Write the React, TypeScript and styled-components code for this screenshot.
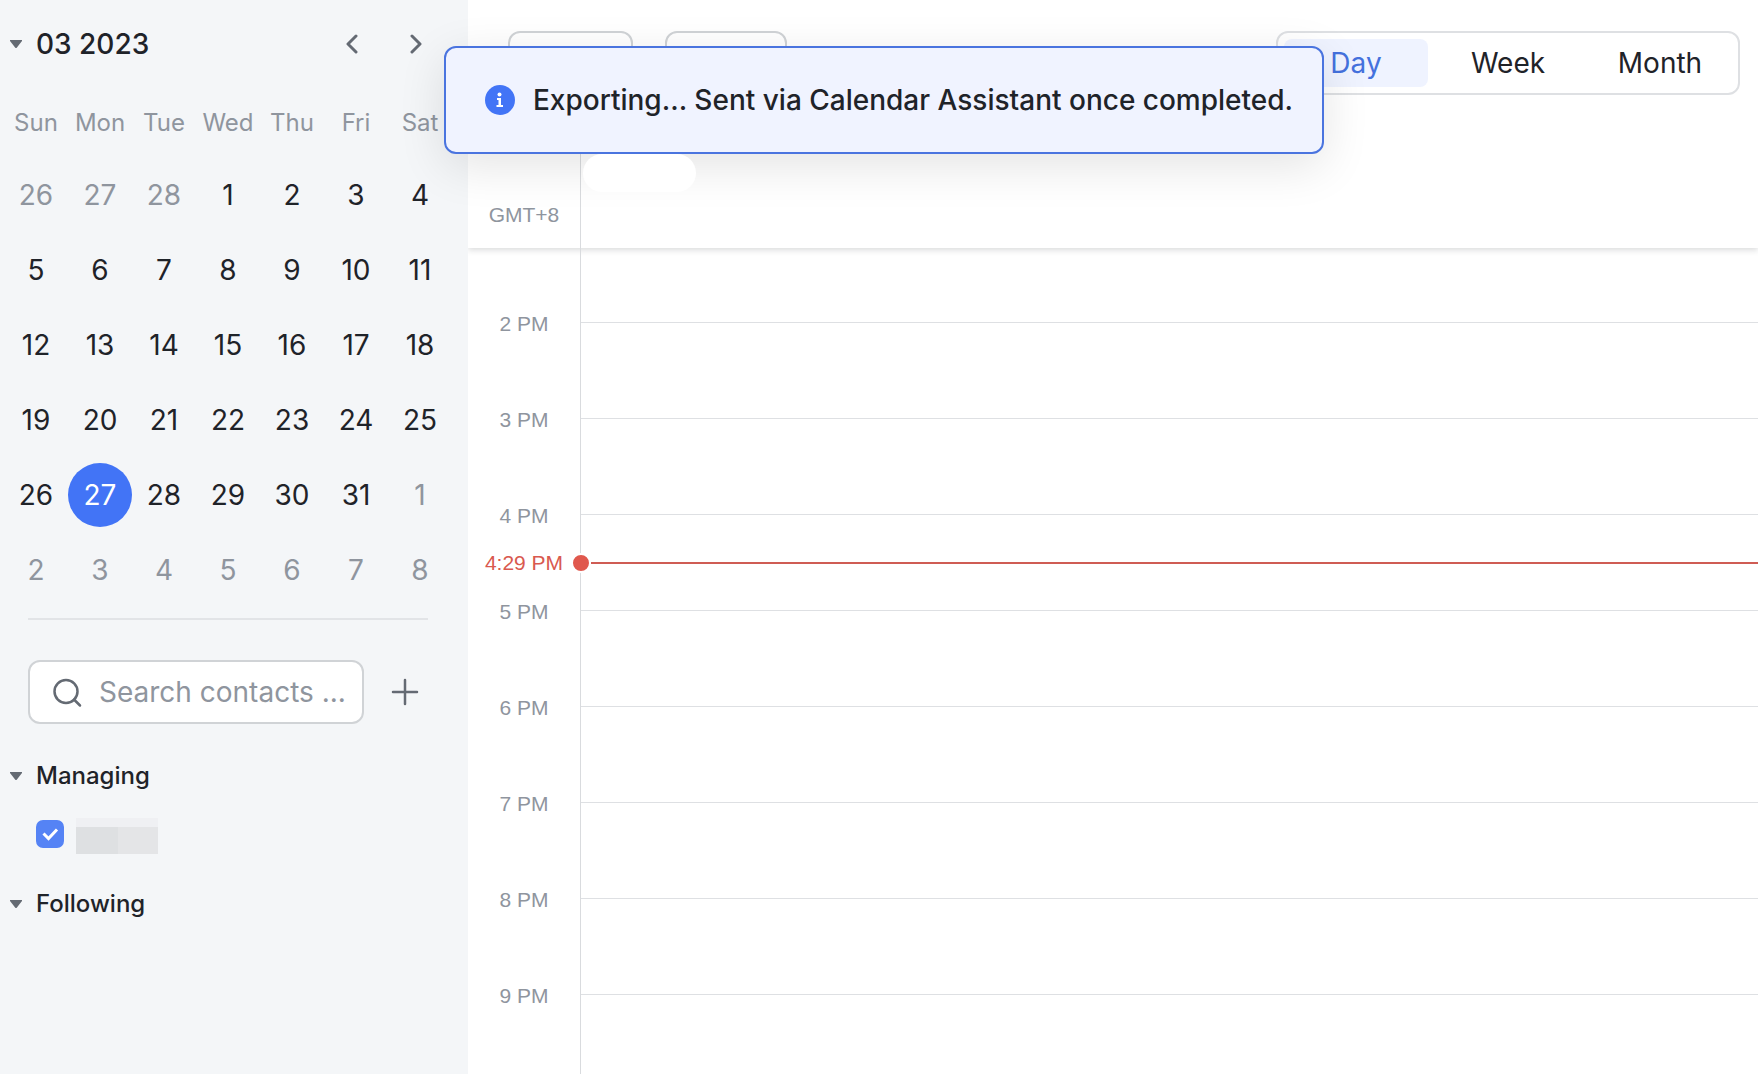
import React, { useState } from "react";
import styled, { createGlobalStyle } from "styled-components";

const GlobalStyle = createGlobalStyle`
  *, *::before, *::after { box-sizing: border-box; }
  body { margin: 0; background: #ffffff; }
  body, button, input {
    font-family: Inter, "Liberation Sans", sans-serif;
    color: #1f2329;
  }
  button {
    margin: 0;
    padding: 0;
    border: 0;
    background: none;
    cursor: pointer;
  }
`;

const Shell = styled.div`
  position: relative;
  display: flex;
  height: 100vh;
  min-height: 900px;
  overflow: hidden;
`;

const Sidebar = styled.aside`
  flex: 0 0 468px;
  min-width: 0;
  background: #f4f6f8;
`;

const MonthBar = styled.div`
  display: flex;
  align-items: center;
  height: 88px;
  padding-right: 35px;
`;

const Foldout = styled.button<{ $large?: boolean }>`
  display: flex;
  align-items: center;
  gap: 14px;
  padding-left: 10px;
  font-size: ${(p) => (p.$large ? 28 : 24)}px;
  line-height: 36px;
  font-weight: 500;
`;

const MonthNav = styled.div`
  display: flex;
  gap: 32px;
  margin-left: auto;
`;

const IconButton = styled.button`
  display: flex;
  align-items: center;
  justify-content: center;
  width: 33px;
  height: 32px;
  color: #646a73;
`;

const WeekGrid = styled.div`
  display: grid;
  grid-template-columns: repeat(7, 64px);
  row-gap: 11px;
  padding-left: 4px;
`;

const Weekday = styled.span`
  height: 64px;
  font-size: 24px;
  line-height: 70px;
  text-align: center;
  color: #8f959e;
`;

const DayCell = styled.button<{ $muted: boolean; $selected: boolean }>`
  height: 64px;
  border-radius: 50%;
  font-size: 28px;
  line-height: 64px;
  color: ${(p) => (p.$selected ? "#ffffff" : p.$muted ? "#8f959e" : "#1f2329")};
  background: ${(p) => (p.$selected ? "#4274f6" : "transparent")};
`;

const Divider = styled.hr`
  height: 2px;
  margin: 16px 40px 40px 28px;
  border: 0;
  background: #e2e4e7;
`;

const SearchRow = styled.div`
  display: flex;
  align-items: center;
  gap: 24px;
  padding: 0 47px 0 28px;
`;

const SearchBox = styled.label`
  display: flex;
  align-items: center;
  gap: 16px;
  flex: 1;
  min-width: 0;
  height: 64px;
  padding: 0 12px 0 22px;
  border: 2px solid #d0d3d6;
  border-radius: 12px;
  background: #ffffff;
  color: #646a73;

  > svg {
    flex: none;
  }
`;

const SearchInput = styled.input`
  flex: 1;
  width: 0;
  min-width: 0;
  padding: 0;
  border: 0;
  outline: 0;
  background: transparent;
  font-size: 28px;
  line-height: 36px;
  text-overflow: ellipsis;

  &::placeholder {
    color: #8f959e;
    opacity: 1;
  }
`;

const Group = styled.section`
  display: flex;
  flex-direction: column;
  align-items: flex-start;
  margin-top: 34px;
`;

const CalendarItem = styled.label`
  display: flex;
  align-items: center;
  gap: 12px;
  height: 36px;
  margin-top: 22px;
  padding-left: 36px;
`;

const CheckWrap = styled.span`
  display: grid;
  width: 28px;
  height: 28px;

  > * {
    grid-area: 1 / 1;
  }
`;

const Checkbox = styled.input`
  appearance: none;
  width: 28px;
  height: 28px;
  margin: 0;
  border: 2px solid #8f959e;
  border-radius: 7px;

  &:checked {
    border-color: #5583f5;
    background: #5583f5;
  }
`;

const CheckMark = styled.svg`
  pointer-events: none;
`;

const MaskedName = styled.span`
  width: 82px;
  height: 36px;
  margin-top: 4px;
  border-top: 9px solid #eff0f3;
  background: linear-gradient(90deg, #dee0e2 0 42px, #e4e5e7 42px);
`;

const Main = styled.main`
  display: flex;
  flex: 1;
  flex-direction: column;
  min-width: 0;
  overflow: hidden;
`;

const Header = styled.header`
  display: flex;
  flex-direction: column;
  height: 248px;
  background: #ffffff;
  box-shadow: 0 2px 6px rgba(31, 35, 41, 0.17);
`;

const Toolbar = styled.div`
  display: flex;
  gap: 32px;
  padding: 31px 18px 0 40px;
`;

const ToolButton = styled.button<{ $width: number }>`
  width: ${(p) => p.$width}px;
  height: 64px;
  border: 2px solid #d0d3d6;
  border-radius: 12px;
`;

const ViewSwitch = styled.div`
  display: flex;
  gap: 8px;
  height: 64px;
  margin-left: auto;
  padding: 6px;
  border: 2px solid #dee0e3;
  border-radius: 12px;
`;

const ViewButton = styled.button<{ $active: boolean }>`
  width: 144px;
  border-radius: 8px;
  font-size: 28px;
  line-height: 48px;
  color: ${(p) => (p.$active ? "#4471dd" : "#1f2329")};
  background: ${(p) => (p.$active ? "#eff3ff" : "transparent")};
`;

const AllDayRow = styled.div`
  display: flex;
  flex: 1;
`;

const ZoneLabel = styled.span`
  display: flex;
  align-items: flex-end;
  justify-content: center;
  width: 112px;
  padding-bottom: 21px;
  font-family: "Liberation Sans", Arial, sans-serif;
  font-size: 21px;
  line-height: 24px;
  color: #8f959e;
`;

const AllDayLane = styled.div`
  display: flex;
  align-items: flex-start;
  flex: 1;
  padding: 59px 2px 0;
  border-left: 1px solid #d9dbde;
`;

const AllDayEvent = styled.span`
  position: relative;
  z-index: 3;
  width: 113px;
  height: 38px;
  border-radius: 19px;
  background: #ffffff;
`;

const Timeline = styled.div`
  position: relative;
  display: flex;
  flex: 1;
  min-height: 0;
`;

const Gutter = styled.div`
  width: 112px;
  padding-top: 28px;
`;

const HourLabel = styled.div`
  height: 96px;
  font-family: "Liberation Sans", Arial, sans-serif;
  font-size: 21px;
  line-height: 96px;
  text-align: center;
  color: #8f959e;
`;

const Lane = styled.div`
  flex: 1;
  border-left: 1px solid #d9dbde;
`;

const Slot = styled.div`
  height: 96px;
  border-bottom: 1px solid #dee0e3;

  &:first-child {
    height: 75px;
  }
`;

const NowMarker = styled.div`
  position: absolute;
  top: 303px;
  left: 0;
  right: 0;
  display: flex;
  align-items: center;
  height: 24px;
`;

const NowLabel = styled.span`
  width: 112px;
  margin-right: -9px;
  font-family: "Liberation Sans", Arial, sans-serif;
  font-size: 21px;
  line-height: 24px;
  text-align: center;
  white-space: nowrap;
  color: #d9594f;
`;

const NowDot = styled.span`
  width: 20px;
  height: 20px;
  border: 2px solid #ffffff;
  border-radius: 50%;
  background: #e0584d;
`;

const NowLine = styled.span`
  flex: 1;
  height: 2px;
  background: #cf5c54;
`;

const ToastLayer = styled.div`
  position: absolute;
  z-index: 2;
  top: 46px;
  left: 10px;
  right: 0;
  display: flex;
  justify-content: center;
  pointer-events: none;
`;

const Toast = styled.div`
  display: flex;
  align-items: center;
  gap: 18px;
  height: 108px;
  padding: 0 29px 0 39px;
  border: 2px solid #4a74df;
  border-radius: 12px;
  background: #f0f3ff;
  box-shadow: 0 12px 48px rgba(0, 0, 0, 0.11);
  font-size: 28px;
  line-height: 36px;
  font-weight: 500;
  white-space: nowrap;
`;

const WEEKDAYS = ["Sun", "Mon", "Tue", "Wed", "Thu", "Fri", "Sat"];
const HOURS = ["2 PM", "3 PM", "4 PM", "5 PM", "6 PM", "7 PM", "8 PM", "9 PM"];
const VIEWS = ["Day", "Week", "Month"];

// Six weeks shown for March 2023, starting on Sunday 26 February.
const DAYS = Array.from({ length: 42 }, (_, i) => {
  const date = new Date(2023, 1, 26 + i);
  return { id: i, day: date.getDate(), muted: date.getMonth() !== 2 };
});

const Caret = () => (
  <svg width="12" height="8" viewBox="0 0 12 8" aria-hidden="true">
    <path d="M0 0h12v1L6.5 8h-1L0 1z" fill="#646a73" />
  </svg>
);

const Chevron = ({ d }: { d: string }) => (
  <svg width="13" height="20" viewBox="0 0 13 20" fill="none" aria-hidden="true">
    <path d={d} stroke="currentColor" strokeWidth="3" strokeLinecap="round" strokeLinejoin="round" />
  </svg>
);

export default function App() {
  const [selected, setSelected] = useState(29);
  const [view, setView] = useState("Day");

  return (
    <>
      <GlobalStyle />
      <Shell>
        <Sidebar>
          <MonthBar>
            <Foldout $large>
              <Caret />
              03 2023
            </Foldout>
            <MonthNav>
              <IconButton aria-label="Previous month">
                <Chevron d="M11 2 3 10l8 8" />
              </IconButton>
              <IconButton aria-label="Next month">
                <Chevron d="M2 2l8 8-8 8" />
              </IconButton>
            </MonthNav>
          </MonthBar>

          <WeekGrid>
            {WEEKDAYS.map((name) => (
              <Weekday key={name}>{name}</Weekday>
            ))}
            {DAYS.map((d) => (
              <DayCell
                key={d.id}
                $muted={d.muted}
                $selected={d.id === selected}
                onClick={() => setSelected(d.id)}
              >
                {d.day}
              </DayCell>
            ))}
          </WeekGrid>

          <Divider />

          <SearchRow>
            <SearchBox>
              <svg width="31" height="31" viewBox="0 0 31 31" fill="none" aria-hidden="true">
                <circle cx="14" cy="14.5" r="11.5" stroke="currentColor" strokeWidth="2.5" />
                <path d="M22 22.5l6 6" stroke="currentColor" strokeWidth="2.5" strokeLinecap="round" />
              </svg>
              <SearchInput type="text" aria-label="Search contacts" placeholder="Search contacts ..." />
            </SearchBox>
            <IconButton aria-label="Add">
              <svg width="28" height="28" viewBox="0 0 28 28" fill="none" aria-hidden="true">
                <path d="M14 2v24M2 14h24" stroke="currentColor" strokeWidth="2.5" strokeLinecap="round" />
              </svg>
            </IconButton>
          </SearchRow>

          <Group>
            <Foldout>
              <Caret />
              Managing
            </Foldout>
            <CalendarItem>
              <CheckWrap>
                <Checkbox type="checkbox" defaultChecked aria-label="Show calendar" />
                <CheckMark width="28" height="28" viewBox="0 0 28 28" fill="none" aria-hidden="true">
                  <path d="M7.5 13.5l5 5 8.5-9" stroke="#ffffff" strokeWidth="3" />
                </CheckMark>
              </CheckWrap>
              <MaskedName />
            </CalendarItem>
          </Group>

          <Group>
            <Foldout>
              <Caret />
              Following
            </Foldout>
          </Group>
        </Sidebar>

        <Main>
          <Header>
            <Toolbar>
              <ToolButton $width={125} aria-label="Today" />
              <ToolButton $width={122} aria-label="Change date" />
              <ViewSwitch>
                {VIEWS.map((name) => (
                  <ViewButton
                    key={name}
                    $active={name === view}
                    aria-pressed={name === view}
                    onClick={() => setView(name)}
                  >
                    {name}
                  </ViewButton>
                ))}
              </ViewSwitch>
            </Toolbar>
            <AllDayRow>
              <ZoneLabel>GMT+8</ZoneLabel>
              <AllDayLane>
                <AllDayEvent />
              </AllDayLane>
            </AllDayRow>
          </Header>

          <Timeline>
            <Gutter>
              {HOURS.map((hour) => (
                <HourLabel key={hour}>{hour}</HourLabel>
              ))}
            </Gutter>
            <Lane>
              {HOURS.map((hour) => (
                <Slot key={hour} />
              ))}
            </Lane>
            <NowMarker>
              <NowLabel>4:29 PM</NowLabel>
              <NowDot />
              <NowLine />
            </NowMarker>
          </Timeline>
        </Main>

        <ToastLayer>
          <Toast role="status">
            <svg width="30" height="30" viewBox="0 0 30 30" aria-hidden="true">
              <circle cx="15" cy="15" r="15" fill="#4274f6" />
              <circle cx="14.5" cy="9.5" r="2" fill="#ffffff" />
              <path d="M12 13h4v7h2v2h-6.500v-2h2v-5H12z" fill="#ffffff" />
            </svg>
            Exporting... Sent via Calendar Assistant once completed.
          </Toast>
        </ToastLayer>
      </Shell>
    </>
  );
}
